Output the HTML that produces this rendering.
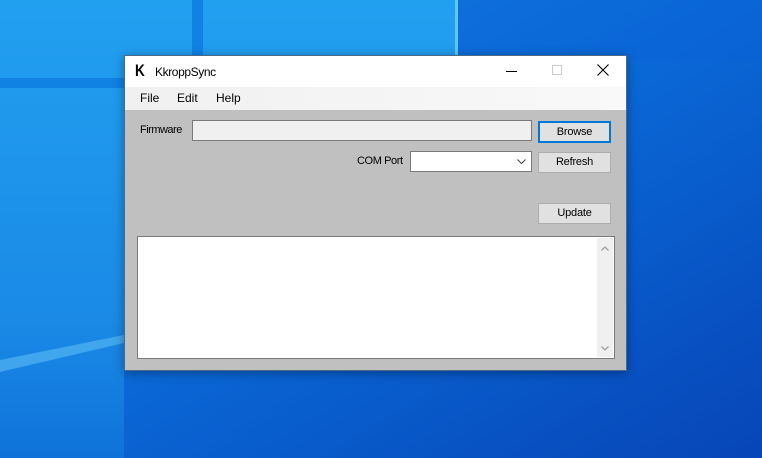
<!DOCTYPE html>
<html><head><meta charset="utf-8"><style>
*{margin:0;padding:0;box-sizing:border-box}
body{width:762px;height:458px;overflow:hidden;position:relative;font-family:"Liberation Sans",sans-serif;font-size:11px;color:#000;background:#0a5ad0}
.abs{position:absolute}
.btn{position:absolute;background:#e1e1e1;border:1px solid #adadad;text-align:center;line-height:19px;font-size:11px;letter-spacing:-0.2px}
</style></head><body>
<svg class="abs" style="left:0;top:0" width="762" height="458">
<defs>
<linearGradient id="bg" x1="0" y1="0" x2="1" y2="1">
<stop offset="0" stop-color="#1d8fe6"/><stop offset="0.5" stop-color="#0a68d6"/><stop offset="1" stop-color="#0745b8"/></linearGradient>
<linearGradient id="lb" x1="0" y1="0" x2="0" y2="1"><stop offset="0" stop-color="#22a0f0"/><stop offset="0.7" stop-color="#1a8ae6"/><stop offset="1" stop-color="#0f72da"/></linearGradient>
</defs>
<rect width="762" height="458" fill="url(#bg)"/>
<rect x="0" y="0" width="762" height="60" fill="#0a62d6" opacity="0.4"/>
<polygon points="0,0 457,0 457,60 124,60 124,458 0,458" fill="url(#lb)"/>
<rect x="192" y="0" width="11" height="60" fill="#0f82e4"/>
<rect x="0" y="78" width="124" height="10" fill="#0f82e4"/>
<rect x="455" y="0" width="3" height="60" fill="#5cc8f6"/>
<polygon points="0,360 124,335 124,343 0,372" fill="#5bbcf3" opacity="0.6"/>
</svg>
<div class="abs" style="left:124px;top:55px;width:503px;height:316px;background:#c0c0c0;border:1px solid #4a6a8a;box-shadow:0 2px 10px rgba(0,0,0,.35)">
 <div class="abs" style="left:0;top:0;width:501px;height:31px;background:#fff">
  <div class="abs" style="left:10px;top:5px;font-weight:bold;font-size:17px;transform:scaleX(0.8);transform-origin:left">K</div>
  <div class="abs" style="left:30px;top:9px;font-size:12px;letter-spacing:-0.4px">KkroppSync</div>
  <div class="abs" style="left:381px;top:15px;width:11px;height:1px;background:#000"></div>
  <div class="abs" style="left:427px;top:9px;width:10px;height:10px;border:1px solid #ccc"></div>
  <svg class="abs" style="left:472px;top:8px" width="12" height="12"><path d="M0.5 0.5L11.5 11.5M11.5 0.5L0.5 11.5" stroke="#000" stroke-width="1.1"/></svg>
 </div>
 <div class="abs" style="left:0;top:31px;width:501px;height:23px;background:linear-gradient(90deg,#f0f0f0,#f9f9f9);font-size:12px">
  <span class="abs" style="left:15px;top:4px">File</span>
  <span class="abs" style="left:52px;top:4px">Edit</span>
  <span class="abs" style="left:91px;top:4px">Help</span>
 </div>
 <div class="abs" style="left:15px;top:68px;letter-spacing:-0.5px">Firmware</div>
 <div class="abs" style="left:67px;top:64px;width:340px;height:21px;background:#f0f0f0;border:1px solid #7a7a7a"></div>
 <div class="btn" style="left:413px;top:65px;width:73px;height:22px;border:2px solid #0078d7;line-height:18px">Browse</div>
 <div class="abs" style="left:232px;top:99px;letter-spacing:-0.4px">COM Port</div>
 <div class="abs" style="left:285px;top:95px;width:122px;height:21px;background:#fff;border:1px solid #7a7a7a">
  <svg class="abs" style="left:106px;top:7px" width="9" height="6"><path d="M0.5 0.5L4.5 4.5L8.5 0.5" stroke="#444" fill="none"/></svg>
 </div>
 <div class="btn" style="left:413px;top:96px;width:73px;height:21px">Refresh</div>
 <div class="btn" style="left:413px;top:147px;width:73px;height:21px">Update</div>
 <div class="abs" style="left:12px;top:180px;width:478px;height:123px;background:#fff;border:1px solid #7a7a7a">
  <div class="abs" style="right:1px;top:1px;width:16px;height:119px;background:#f0f0f0">
   <svg class="abs" style="left:4px;top:8px" width="8" height="5"><path d="M0.5 4.5L4 1L7.5 4.5" stroke="#a0a0a0" stroke-width="1.3" fill="none"/></svg>
   <svg class="abs" style="left:4px;top:108px" width="8" height="5"><path d="M0.5 0.5L4 4L7.5 0.5" stroke="#a0a0a0" stroke-width="1.3" fill="none"/></svg>
  </div>
 </div>
</div>
</body></html>
